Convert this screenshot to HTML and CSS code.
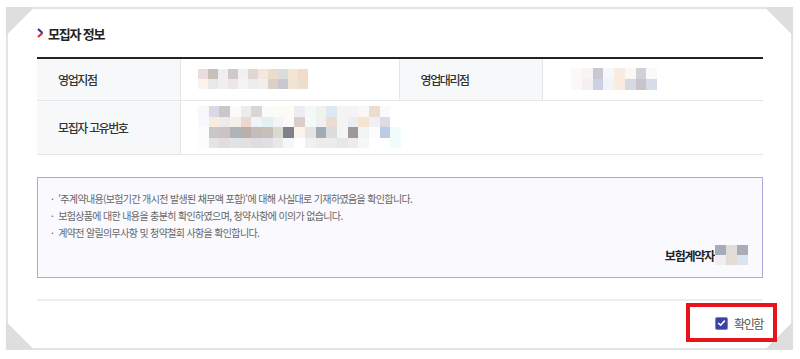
FILE: index.html
```html
<!DOCTYPE html>
<html lang="ko">
<head>
    <meta charset="UTF-8">
    <title>모집자 정보</title>
    <link rel="stylesheet" href="styles.css">
</head>
<body>
    <div class="frame">
        <span class="corner corner-tl"></span>
        <span class="corner corner-tr"></span>
        <span class="corner corner-bl"></span>
        <span class="corner corner-br"></span>

        <h2 class="sec-title">
            <svg class="chevron" width="7" height="10" viewBox="0 0 7 10">
                <path d="M1 1 L5.5 5" stroke="#2b3990" stroke-width="2.2" fill="none"/>
                <path d="M5.5 5 L1 9" stroke="#e5262d" stroke-width="2.2" fill="none"/>
            </svg>
            모집자 정보
        </h2>

        <table class="info-table">
            <colgroup>
                <col class="col-th">
                <col class="col-td">
                <col class="col-th">
                <col>
            </colgroup>
            <tr class="row-a">
                <th>영업지점</th>
                <td>
                    <svg class="mosaic" width="110" height="20" viewBox="0 0 11 2" shape-rendering="crispEdges">
                        <rect x="0" y="0" width="1" height="1" fill="#e8dcdc"/>
                        <rect x="1" y="0" width="1" height="1" fill="#c8c0b8"/>
                        <rect x="2" y="0" width="1" height="1" fill="#f0eeee"/>
                        <rect x="3" y="0" width="1" height="1" fill="#d0c8c8"/>
                        <rect x="4" y="0" width="1" height="1" fill="#f2f0f0"/>
                        <rect x="5" y="0" width="1" height="1" fill="#e0d6d4"/>
                        <rect x="6" y="0" width="1" height="1" fill="#f4e8dc"/>
                        <rect x="7" y="0" width="1" height="1" fill="#ecdcca"/>
                        <rect x="8" y="0" width="1" height="1" fill="#dcdcdc"/>
                        <rect x="9" y="0" width="1" height="1" fill="#f4e4d4"/>
                        <rect x="10" y="0" width="1" height="1" fill="#f0dcc8"/>
                        <rect x="0" y="1" width="1" height="1" fill="#fcf4ec"/>
                        <rect x="1" y="1" width="1" height="1" fill="#e8e8e8"/>
                        <rect x="2" y="1" width="1" height="1" fill="#f0eeee"/>
                        <rect x="3" y="1" width="1" height="1" fill="#ece6e6"/>
                        <rect x="4" y="1" width="1" height="1" fill="#f4f4f4"/>
                        <rect x="5" y="1" width="1" height="1" fill="#f0ecec"/>
                        <rect x="6" y="1" width="1" height="1" fill="#f2eeea"/>
                        <rect x="7" y="1" width="1" height="1" fill="#dcd0c8"/>
                        <rect x="8" y="1" width="1" height="1" fill="#c8c8d0"/>
                        <rect x="9" y="1" width="1" height="1" fill="#f0e4d4"/>
                        <rect x="10" y="1" width="1" height="1" fill="#ece0cc"/>
                    </svg>
                </td>
                <th>영업대리점</th>
                <td>
                    <svg class="mosaic mosaic-agent" width="86" height="22" viewBox="0 0 8 2" preserveAspectRatio="none" shape-rendering="crispEdges">
                        <rect x="0" y="0" width="1" height="1" fill="#fcf8f8"/>
                        <rect x="1" y="0" width="1" height="1" fill="#f8f4f4"/>
                        <rect x="2" y="0" width="1" height="1" fill="#c8c8d0"/>
                        <rect x="3" y="0" width="1" height="1" fill="#f4f8fc"/>
                        <rect x="4" y="0" width="1" height="1" fill="#f8ece0"/>
                        <rect x="5" y="0" width="1" height="1" fill="#faf8f4"/>
                        <rect x="6" y="0" width="1" height="1" fill="#d0d0d8"/>
                        <rect x="7" y="0" width="1" height="1" fill="#fafafa"/>
                        <rect x="0" y="1" width="1" height="1" fill="#fcf8f8"/>
                        <rect x="1" y="1" width="1" height="1" fill="#f4f0f0"/>
                        <rect x="2" y="1" width="1" height="1" fill="#ccd0e0"/>
                        <rect x="3" y="1" width="1" height="1" fill="#f0f4f8"/>
                        <rect x="4" y="1" width="1" height="1" fill="#f8ece0"/>
                        <rect x="5" y="1" width="1" height="1" fill="#d8d8e0"/>
                        <rect x="6" y="1" width="1" height="1" fill="#c8c4cc"/>
                        <rect x="7" y="1" width="1" height="1" fill="#d8dce8"/>
                    </svg>
                </td>
            </tr>
            <tr class="row-b">
                <th>모집자 고유번호</th>
                <td colspan="3">
                    <svg class="mosaic" width="203" height="42" viewBox="0 0 19 4" preserveAspectRatio="none" shape-rendering="crispEdges">
                        <rect x="0" y="0" width="1" height="1" fill="#f8f8fc"/>
                        <rect x="1" y="0" width="1" height="1" fill="#d8d8e8"/>
                        <rect x="2" y="0" width="1" height="1" fill="#c8c8c8"/>
                        <rect x="3" y="0" width="1" height="1" fill="#fafafa"/>
                        <rect x="4" y="0" width="1" height="1" fill="#ececec"/>
                        <rect x="5" y="0" width="1" height="1" fill="#ddd4d4"/>
                        <rect x="6" y="0" width="1" height="1" fill="#fafafa"/>
                        <rect x="7" y="0" width="1" height="1" fill="#fbfbf8"/>
                        <rect x="8" y="0" width="1" height="1" fill="#fcfcf4"/>
                        <rect x="9" y="0" width="1" height="1" fill="#ececf4"/>
                        <rect x="10" y="0" width="1" height="1" fill="#f4f8f8"/>
                        <rect x="11" y="0" width="1" height="1" fill="#eef4ec"/>
                        <rect x="12" y="0" width="1" height="1" fill="#dce8f4"/>
                        <rect x="13" y="0" width="1" height="1" fill="#f4f4f4"/>
                        <rect x="14" y="0" width="1" height="1" fill="#f4f4f8"/>
                        <rect x="15" y="0" width="1" height="1" fill="#faf8f4"/>
                        <rect x="16" y="0" width="1" height="1" fill="#ecdcd0"/>
                        <rect x="17" y="0" width="1" height="1" fill="#fafafa"/>
                        <rect x="0" y="1" width="1" height="1" fill="#f8f8fc"/>
                        <rect x="1" y="1" width="1" height="1" fill="#f8ece0"/>
                        <rect x="2" y="1" width="1" height="1" fill="#ececec"/>
                        <rect x="3" y="1" width="1" height="1" fill="#f4f0ec"/>
                        <rect x="4" y="1" width="1" height="1" fill="#ecd8cc"/>
                        <rect x="5" y="1" width="1" height="1" fill="#f0f4f8"/>
                        <rect x="6" y="1" width="1" height="1" fill="#e4f0f0"/>
                        <rect x="7" y="1" width="1" height="1" fill="#f4f4f4"/>
                        <rect x="8" y="1" width="1" height="1" fill="#fafafa"/>
                        <rect x="9" y="1" width="1" height="1" fill="#dccccc"/>
                        <rect x="10" y="1" width="1" height="1" fill="#f4f8f8"/>
                        <rect x="11" y="1" width="1" height="1" fill="#f0f0f0"/>
                        <rect x="12" y="1" width="1" height="1" fill="#ecdcd4"/>
                        <rect x="13" y="1" width="1" height="1" fill="#f4f4f4"/>
                        <rect x="14" y="1" width="1" height="1" fill="#ececf4"/>
                        <rect x="15" y="1" width="1" height="1" fill="#f4e4d0"/>
                        <rect x="16" y="1" width="1" height="1" fill="#f0f0f4"/>
                        <rect x="17" y="1" width="1" height="1" fill="#dcdce4"/>
                        <rect x="0" y="2" width="1" height="1" fill="#fcfcfc"/>
                        <rect x="1" y="2" width="1" height="1" fill="#c8c8c8"/>
                        <rect x="2" y="2" width="1" height="1" fill="#ccc4c4"/>
                        <rect x="3" y="2" width="1" height="1" fill="#b0b4b8"/>
                        <rect x="4" y="2" width="1" height="1" fill="#b8b0a8"/>
                        <rect x="5" y="2" width="1" height="1" fill="#c4bcb8"/>
                        <rect x="6" y="2" width="1" height="1" fill="#c8c0b8"/>
                        <rect x="7" y="2" width="1" height="1" fill="#d8dcd0"/>
                        <rect x="8" y="2" width="1" height="1" fill="#808088"/>
                        <rect x="9" y="2" width="1" height="1" fill="#fcf4ec"/>
                        <rect x="10" y="2" width="1" height="1" fill="#e4e4e0"/>
                        <rect x="11" y="2" width="1" height="1" fill="#a0acb4"/>
                        <rect x="12" y="2" width="1" height="1" fill="#dcdcdc"/>
                        <rect x="13" y="2" width="1" height="1" fill="#f4f4f4"/>
                        <rect x="14" y="2" width="1" height="1" fill="#a09898"/>
                        <rect x="15" y="2" width="1" height="1" fill="#f0f4f4"/>
                        <rect x="16" y="2" width="1" height="1" fill="#fcfcfc"/>
                        <rect x="17" y="2" width="1" height="1" fill="#b8cce4"/>
                        <rect x="18" y="2" width="1" height="1" fill="#f0fcfc"/>
                        <rect x="0" y="3" width="1" height="1" fill="#fcfcfc"/>
                        <rect x="1" y="3" width="1" height="1" fill="#e4e4e4"/>
                        <rect x="2" y="3" width="1" height="1" fill="#e4dcdc"/>
                        <rect x="3" y="3" width="1" height="1" fill="#e0e4e8"/>
                        <rect x="4" y="3" width="1" height="1" fill="#e4e0e0"/>
                        <rect x="5" y="3" width="1" height="1" fill="#e0dce0"/>
                        <rect x="6" y="3" width="1" height="1" fill="#e0e0e4"/>
                        <rect x="7" y="3" width="1" height="1" fill="#e8e8ec"/>
                        <rect x="8" y="3" width="1" height="1" fill="#f0f8fc"/>
                        <rect x="10" y="3" width="1" height="1" fill="#f0f0f0"/>
                        <rect x="11" y="3" width="1" height="1" fill="#ececec"/>
                        <rect x="12" y="3" width="1" height="1" fill="#ececec"/>
                        <rect x="13" y="3" width="1" height="1" fill="#e8e8e8"/>
                        <rect x="14" y="3" width="1" height="1" fill="#ececec"/>
                        <rect x="15" y="3" width="1" height="1" fill="#f4f8f8"/>
                        <rect x="18" y="3" width="1" height="1" fill="#f0fcfc"/>
                    </svg>
                </td>
            </tr>
        </table>

        <div class="notice">
            <ul class="notice-list">
                <li>'주계약내용(보험기간 개시전 발생된 채무액 포함)'에 대해 사실대로 기재하였음을 확인합니다.</li>
                <li>보험상품에 대한 내용을 충분히 확인하였으며, 청약사항에 이의가 없습니다.</li>
                <li>계약전 알릴의무사항 및 청약철회 사항을 확인합니다.</li>
            </ul>
            <p class="signer">
                보험계약자
                <svg class="mosaic" width="33" height="20" viewBox="0 0 3 2" preserveAspectRatio="none" shape-rendering="crispEdges">
                    <rect x="0" y="0" width="1" height="1" fill="#a8acb8"/>
                    <rect x="1" y="0" width="1" height="1" fill="#e0dcd8"/>
                    <rect x="2" y="0" width="1" height="1" fill="#a8acb4"/>
                    <rect x="0" y="1" width="1" height="1" fill="#f0eef0"/>
                    <rect x="1" y="1" width="1" height="1" fill="#e4dcd4"/>
                    <rect x="2" y="1" width="1" height="1" fill="#dce4f0"/>
                </svg>
            </p>
        </div>

        <div class="confirm">
            <label class="check">
                <span class="check-box">
                    <svg width="9" height="8" viewBox="0 0 9 8">
                        <path d="M1.2 4 L3.6 6.2 L7.8 1.6" stroke="#fff" stroke-width="1.6" fill="none"/>
                    </svg>
                </span>
                확인함
            </label>
            <span class="highlight"></span>
        </div>
    </div>
</body>
</html>
```

FILE: styles.css
```css
* {
    margin: 0;
    padding: 0;
    box-sizing: border-box;
}

body {
    font-family: "Noto Sans CJK KR", "Noto Sans", sans-serif;
    background: #fff;
    color: #333;
}

.frame {
    position: relative;
    width: 787px;
    margin: 7px 0 0 6px;
    padding: 14px 28px 0 29px;
    border: 2px solid #e4e4e4;
    box-shadow: 0 1px 2px rgba(0, 0, 0, 0.06);
}

.corner {
    position: absolute;
    width: 29px;
    height: 28px;
}

.corner-tl {
    top: -2px;
    left: -2px;
    background: linear-gradient(135deg, #dedede 50%, transparent 50%);
}

.corner-tr {
    top: -2px;
    right: -2px;
    background: linear-gradient(225deg, #dedede 50%, transparent 50%);
}

.corner-bl {
    bottom: -2px;
    left: -2px;
    background: linear-gradient(45deg, #dedede 50%, transparent 50%);
}

.corner-br {
    bottom: -2px;
    right: -2px;
    background: linear-gradient(315deg, #dedede 50%, transparent 50%);
}

.sec-title {
    display: flex;
    align-items: center;
    height: 20px;
    margin-bottom: 14px;
    font-size: 13px;
    font-weight: 700;
    color: #222;
    letter-spacing: -1.2px;
}

.chevron {
    margin-right: 4px;
}

/* info table */
.info-table {
    width: 100%;
    table-layout: fixed;
    border-collapse: collapse;
    border-top: 2px solid #222;
}

.col-th {
    width: 143px;
}

.col-td {
    width: 219px;
}

.info-table th,
.info-table td {
    border-bottom: 1px solid #e6e6e6;
    vertical-align: middle;
}

.info-table th {
    padding-left: 21px;
    background: #f7f8fa;
    border-right: 1px solid #e6e6e6;
    text-align: left;
    font-size: 12px;
    font-weight: 500;
    color: #333;
    letter-spacing: -1.4px;
}

.info-table td {
    padding-left: 17px;
}

.info-table td + th {
    border-left: 1px solid #e6e6e6;
}

.row-a th,
.row-a td {
    height: 42px;
}

.row-b th,
.row-b td {
    height: 54px;
}

.mosaic {
    display: block;
}

.mosaic-agent {
    margin-left: 11px;
}

/* notice box */
.notice {
    margin-top: 22px;
    padding: 12px 14px 13px 13px;
    background: #f9f9fe;
    border: 1px solid #a9abe0;
}

.notice-list {
    list-style: none;
}

.notice-list li {
    font-size: 10px;
    line-height: 17px;
    color: #666;
    letter-spacing: -0.65px;
}

.notice-list li::before {
    content: "·";
    margin-right: 5px;
}

.signer {
    display: flex;
    justify-content: flex-end;
    align-items: center;
    height: 17px;
    margin-top: 6px;
    font-size: 12px;
    font-weight: 700;
    color: #222;
    letter-spacing: -1.2px;
}

.signer .mosaic {
    margin-left: 1px;
}

/* confirm row */
.confirm {
    position: relative;
    display: flex;
    justify-content: flex-end;
    align-items: center;
    height: 49px;
    margin-top: 21px;
    padding-bottom: 2px;
    border-top: 2px solid #eeeeee;
}

.check {
    display: flex;
    align-items: center;
    font-size: 12px;
    color: #555;
    letter-spacing: -1.4px;
}

.check-box {
    display: flex;
    align-items: center;
    justify-content: center;
    width: 13px;
    height: 13px;
    margin-right: 6px;
    background: #3a42a6;
    border: 1px solid #7a82d6;
    border-radius: 2px;
}

.highlight {
    position: absolute;
    top: 2px;
    right: -14px;
    width: 91px;
    height: 39px;
    border: 4px solid #e8141c;
}
```
